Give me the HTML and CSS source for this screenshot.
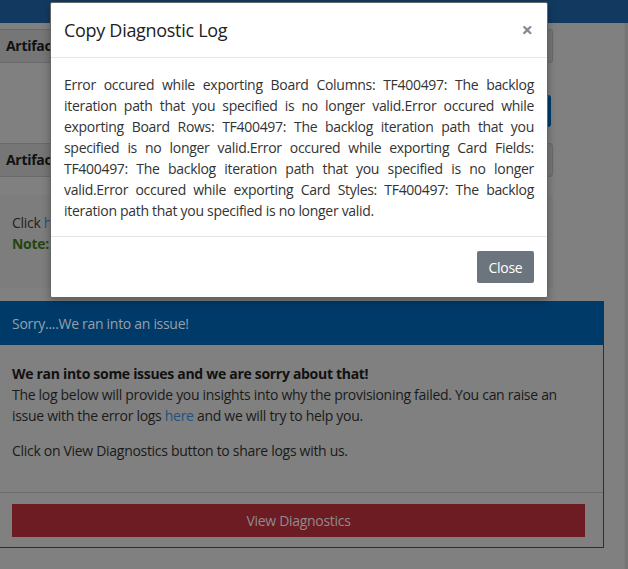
FILE: index.html
```html
<!DOCTYPE html>
<html lang="en">
<head>
<meta charset="utf-8">
<title>Copy Diagnostic Log</title>
<link rel="stylesheet" href="styles.css">
</head>
<body>
<div class="page">
  <header class="topbar"></header>
  <div class="main">
    <div class="col">
      <div class="upper">
        <div class="card-head">Artifacts</div>
        <div class="action-row"><button class="btn btn-blue">Start</button></div>
        <div class="card-head">Artifacts Log</div>
        <div class="well">
          <div>Click <a class="link" href="#">here</a> to download the artifacts.</div>
          <div><span class="note">Note:</span> artifacts are generated after provisioning.</div>
        </div>
      </div>
      <section class="panel">
        <div class="panel-head">Sorry....We ran into an issue!</div>
        <div class="panel-body">
          <p><strong>We ran into some issues and we are sorry about that!</strong><br>The log below will provide you insights into why the provisioning failed. You can raise an issue with the error logs <a class="link" href="#">here</a> and we will try to help you.</p>
          <p>Click on View Diagnostics button to share logs with us.</p>
        </div>
        <div class="panel-foot"><button class="btn btn-red">View Diagnostics</button></div>
      </section>
    </div>
    <div class="strip"></div>
  </div>
  <div class="modal">
    <div class="modal-head">
      <h5 class="modal-title">Copy Diagnostic Log</h5>
      <button class="modal-x" aria-label="Close">&times;</button>
    </div>
    <div class="modal-body">Error occured while exporting Board Columns: TF400497: The backlog iteration path that you specified is no longer valid.Error occured while exporting Board Rows: TF400497: The backlog iteration path that you specified is no longer valid.Error occured while exporting Card Fields: TF400497: The backlog iteration path that you specified is no longer valid.Error occured while exporting Card Styles: TF400497: The backlog iteration path that you specified is no longer valid.</div>
    <div class="modal-foot"><button class="btn btn-gray">Close</button></div>
  </div>
</div>
</body>
</html>
```
FILE: styles.css
```css
/* Page content sits behind a modal backdrop; the colours below are the
   already-dimmed values (content under a 50% black overlay). */
* { box-sizing: border-box; }
html { margin: 0; padding: 0; background-color: rgb(128, 128, 128); }
body {
  margin: 0;
  padding: 0;
  min-height: 569px;
  font-family: "Open Sans", "Noto Sans", sans-serif;
  font-size: 14px;
  line-height: 21px;
  letter-spacing: -0.3px;
  color: rgb(26, 26, 26);
  background-color: rgb(128, 128, 128);
}
.page {
  position: relative;
  min-height: 569px;
  display: flex;
  flex-direction: column;
  background-color: rgb(128, 128, 128);
}
.topbar { height: 23px; background-color: rgb(18, 58, 96); flex: none; }
.main { flex: 1; display: flex; }
.col { flex: 1; }
.strip { width: 4px; background-color: rgb(118, 118, 118); border-left: 1px solid rgb(124, 124, 124); }

.upper { width: 553px; }
.card-head {
  height: 34px;
  margin-top: 6px;
  padding: 0 6px;
  line-height: 32px;
  font-weight: 700;
  color: rgb(17, 17, 17);
  background-color: rgb(118, 118, 118);
  border: 1px solid rgb(106, 106, 106);
  border-left: 0;
  border-radius: 0 4px 4px 0;
  white-space: nowrap;
  overflow: hidden;
}
.action-row { display: flex; justify-content: flex-end; padding: 32px 2px 10px 0; }
.btn { font: inherit; letter-spacing: inherit; border: 0; cursor: pointer; }
.btn-blue { width: 160px; height: 32px; background-color: rgb(0, 60, 107); color: rgb(128, 128, 128); border-radius: 3px; }
.well {
  margin-top: 18px;
  padding: 17px 12px 34px;
  background-color: rgb(125, 125, 125);
  color: rgb(34, 34, 34);
}
.link { color: rgb(34, 82, 127); text-decoration: none; }
.note { color: rgb(38, 68, 15); font-weight: 700; }

.panel {
  margin-top: 13px;
  width: 604px;
  border: 1px solid rgb(0, 58, 104);
  border-left: 0;
  background-color: rgb(128, 128, 128);
}
.panel-head {
  height: 43px;
  line-height: 43px;
  padding: 0 12px;
  background-color: rgb(0, 58, 104);
  color: rgb(150, 160, 172);
}
.panel-body { padding: 18px 12px 31px; color: rgb(26, 26, 26); }
.panel-body p { margin: 0 0 14px; }
.panel-body p:last-child { margin-bottom: 0; }
.panel-body strong { color: rgb(17, 17, 17); }
.panel-foot { border-top: 1px solid rgb(108, 108, 108); padding: 11px 18px 10px 12px; }
.btn-red { display: block; width: 100%; height: 33px; background-color: rgb(110, 28, 36); color: rgb(140, 140, 140); }

.modal {
  position: absolute;
  left: 50px;
  top: 2px;
  width: 498px;
  background: #fff;
  border: 1px solid rgb(102, 102, 102);
  border-radius: 2px;
  box-shadow: 0 3px 9px rgba(0, 0, 0, 0.3);
}
.modal-head {
  height: 55px;
  display: flex;
  align-items: center;
  padding: 0 13px;
  border-bottom: 1px solid #e5e5e5;
}
.modal-title { margin: 0; font-size: 18px; font-weight: 400; color: #222; line-height: 1; }
.modal-x {
  margin-left: auto;
  margin-right: 1px;
  padding: 0;
  border: 0;
  background: none;
  font: 700 20px/1 "Open Sans", sans-serif;
  color: #888;
}
.modal-body { padding: 16px 13px 15px; text-align: justify; color: #333; }
.modal-foot {
  display: flex;
  justify-content: flex-end;
  padding: 14px 13px 14px;
  border-top: 1px solid #e5e5e5;
}
.btn-gray { width: 57px; height: 32px; background-color: #6c757d; color: #fff; border-radius: 2px; }
```
